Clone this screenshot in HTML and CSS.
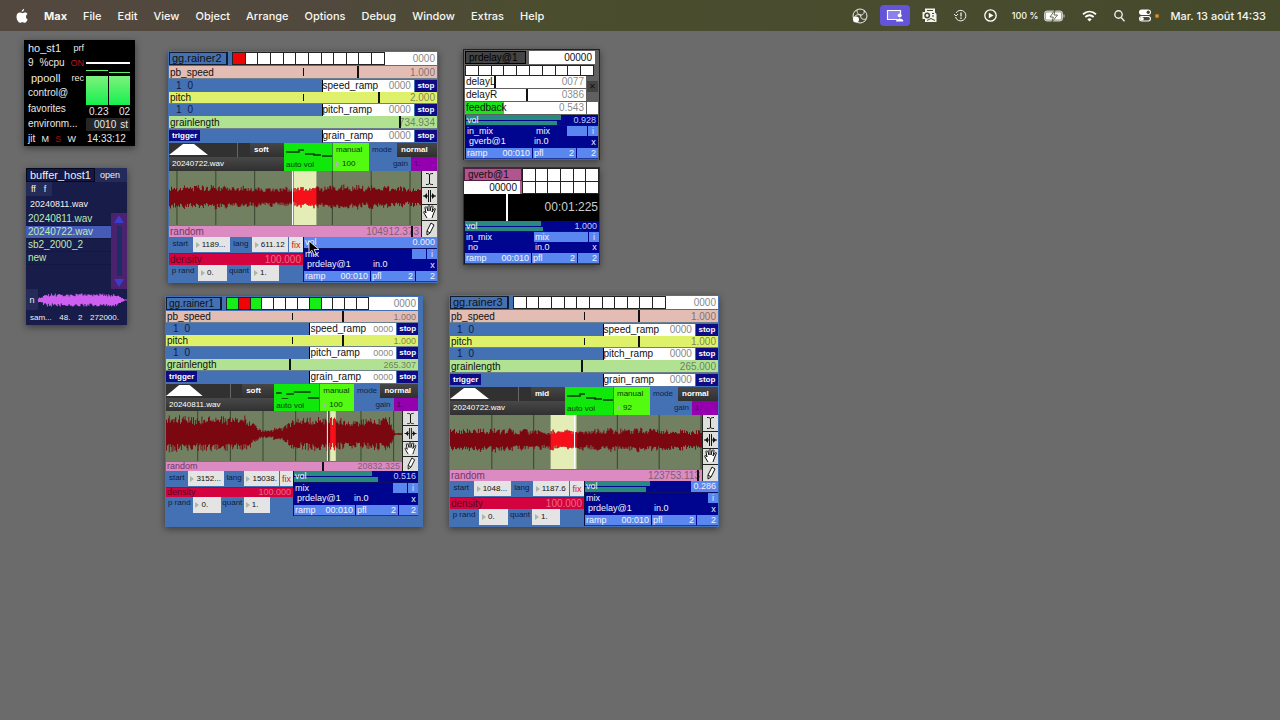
FILE: index.html
```html
<!DOCTYPE html>
<html lang="fr">
<head>
<meta charset="utf-8">
<title>Max</title>
<link rel="stylesheet" href="styles.css">
</head>
<body>
<header class="menubar">
  <nav class="menus">
    <svg class="apple" viewBox="0 0 12 14"><path d="M8.1 0c.1 1.400-1.100 2.800-2.400 2.800C5.500 1.500 6.800.2 8.100 0zM10 7.400c0-1.300.7-2 1.500-2.500-.7-1-1.700-1.300-2.500-1.300-1 0-1.800.6-2.500.6-.7 0-1.600-.6-2.600-.6C2.200 3.600.5 5 .5 7.800c0 2.900 2 6 3.500 6 .9 0 1.300-.6 2.400-.6s1.400.6 2.300.6c1.300 0 2.400-2 2.900-3.400C10.600 9.900 10 8.800 10 7.400z"/></svg>
    <button class="menu app">Max</button>
    <button class="menu">File</button>
    <button class="menu">Edit</button>
    <button class="menu">View</button>
    <button class="menu">Object</button>
    <button class="menu">Arrange</button>
    <button class="menu">Options</button>
    <button class="menu">Debug</button>
    <button class="menu">Window</button>
    <button class="menu">Extras</button>
    <button class="menu">Help</button>
  </nav>
  <div class="status">
    <svg width="16" height="16" viewBox="0 0 16 16" fill="none" stroke="#eee"><circle cx="8" cy="8" r="7"/><path d="M5 2c0 4 2 5 4 5s4-2 3-5M9 7c-1 3 1 5 5 4M9 7C6 6 3 7 2 10"/><circle cx="4" cy="11.500" r="3" fill="#fff" stroke="none"/></svg>
    <span class="share"><svg width="18" height="13" viewBox="0 0 18 13"><path d="M11 10.500H1.500v-9h13V5" fill="#8b80ee" stroke="#fff" stroke-width="1.200"/><circle cx="13.700" cy="6.500" r="2" fill="#fff"/><path d="M10 12.500c0-4 7.400-4 7.400 0z" fill="#fff"/></svg></span>
    <svg width="15" height="15" viewBox="0 0 15 15"><path d="M3 .5h10v4l1.500 1.500v8H3v-3H.5V4H3z" fill="#f4f4ee"/><path d="M5 2.500h6M10 5.500h2M10 8h2M5 12.500l4-2 4 2" fill="none" stroke="#464a2c"/><circle cx="5.200" cy="7.500" r="2.200" fill="none" stroke="#464a2c" stroke-width="1.500"/></svg>
    <svg width="13" height="13" viewBox="0 0 13 13" fill="none" stroke="#eee"><path d="M2 4a5.300 5.300 0 1 1-.5 4"/><path d="M0 5l2 2 2-2" /><path d="M7 3.500v4M7 8.500v1.500" stroke-width="1.300"/></svg>
    <svg width="13" height="13" viewBox="0 0 13 13"><circle cx="6.500" cy="6.500" r="5.700" fill="none" stroke="#fff" stroke-width="1.300"/><path d="M4.800 3.700v5.600l4.700-2.800z" fill="#fff"/></svg>
    <span class="battery">100 %
      <svg width="21" height="12" viewBox="0 0 21 12"><rect x=".5" y="1" width="18" height="10" rx="2.500" fill="#aaa990" stroke="#ccc"/><rect x="2" y="2.500" width="15" height="7" rx="1" fill="#fff"/><path d="M11 0L6 7h3.300L8 12l5.500-7H10z" fill="#fff" stroke="#464a2c" stroke-width=".8"/><path d="M20 4.500v3" stroke="#ccc"/></svg></span>
    <svg width="15" height="12" viewBox="0 0 15 12" fill="none" stroke="#fff" stroke-width="1.900"><path d="M1 4.300c4-3.600 9-3.600 13 0M3.300 7c2.600-2.300 5.800-2.300 8.400 0"/><path d="M5.300 9.200c1.400-1.200 3-1.200 4.400 0L7.500 11.500z" fill="#fff" stroke="none"/></svg>
    <svg width="11" height="12" viewBox="0 0 11 12" fill="none" stroke="#eee" stroke-width="1.400"><circle cx="4.500" cy="4.500" r="3.700"/><path d="M7.200 7.500l3.300 3.800"/></svg>
    <span class="control"><svg width="12" height="13" viewBox="0 0 13 13"><rect width="13" height="6" rx="3" fill="#fff"/><circle cx="10" cy="3" r="1.800" fill="#464a2c"/><rect x=".6" y="7.600" width="11.800" height="4.800" rx="2.400" fill="none" stroke="#fff" stroke-width="1.200"/><circle cx="3.200" cy="10" r="2" fill="#fff"/></svg><i class="dot"></i></span>
    <time class="clock">Mar. 13 août 14:33</time>
  </div>
</header>

<main class="desktop">
  <section class="win host">
    <div class="host-left">
      <div class="host-row"><span class="host-title">ho_st1</span><button class="small">prf</button></div>
      <div class="host-row"><span>9</span><span>%cpu</span><button class="small on">ON</button></div>
      <div class="host-row"><span class="host-title inset">ppooll</span><button class="small">rec</button></div>
      <div class="host-row">control@</div>
      <div class="host-row">favorites</div>
      <div class="host-row">environm...</div>
      <div class="host-row spaced"><span>jit</span><span class="letter">M</span><span class="letter red">S</span><span class="letter">W</span></div>
    </div>
    <div class="host-right">
      <div class="white-line"></div>
      <div class="levels"><div class="level"></div><div class="level low"></div></div>
      <div class="host-pair"><span>0.23</span><span>02</span></div>
      <div class="host-pair count"><span>0010</span><span>st</span></div>
      <div class="host-time">14:33:12</div>
    </div>
  </section>

  <section class="win buffer">
    <div class="buffer-head"><span class="buffer-title">buffer_host1</span><button class="open">open</button></div>
    <div class="buffer-tabs"><button class="small">ff</button><button class="small">f</button></div>
    <div class="buffer-current">20240811.wav</div>
    <div class="buffer-body">
      <ul class="files"><li>20240811.wav</li><li class="selected">20240722.wav</li><li>sb2_2000_2</li><li>new</li></ul>
      <div class="scroll"><i class="up"></i><i class="track"></i><i class="down"></i></div>
    </div>
    <div class="buffer-wave"><button class="note">n</button><svg class="mini" viewBox="0 0 90 16" preserveAspectRatio="none"></svg></div>
    <div class="buffer-foot"><span>sam...</span><span>48.</span><span>2</span><span>272000.</span></div>
  </section>

  <section class="win rainer r2" data-index="0"></section>
  <section class="win rainer r1 compact" data-index="1"></section>
  <section class="win rainer r3" data-index="2"></section>

  <section class="win prdelay">
    <div class="head"><span class="tag">prdelay@1</span><input class="num-white" aria-label="prdelay number" value="00000"></div>
    <div class="cells ten"></div>
    <div class="delay-body">
      <div class="delay-bars">
        <div class="bar white"><span>delayL</span><i class="mark" style="left:24%"></i><b>0077</b></div>
        <div class="bar white"><span>delayR</span><i class="mark" style="left:50%"></i><b>0386</b></div>
        <div class="bar white"><i class="fill" style="width:32%"></i><span>feedback</span><b>0.543</b></div>
      </div>
      <div class="delay-side"><button class="close" aria-label="close">✕</button><i></i></div>
    </div>
    <div class="mixer" data-mixer="prdelay"></div>
  </section>

  <section class="win gverb">
    <div class="gverb-head">
      <div class="gverb-name"><span class="tag pink">gverb@1</span><input class="num-white" aria-label="gverb number" value="00000"></div>
      <div class="cells double"></div>
    </div>
    <div class="time"><i class="mark" style="left:31%"></i>00:01:225</div>
    <div class="mixer" data-mixer="gverb"></div>
  </section>

  <svg class="cursor" viewBox="0 0 12 16"><path d="M1 1v12l3-2.800 2 5 2.200-1-2-4.700H11z" fill="#000" stroke="#fff" stroke-width=".8"/></svg>
</main>
<script src="app.js"></script>
</body>
</html>
```
FILE: styles.css
```css
* { box-sizing: border-box; }
body {
  margin: 0;
  min-height: 100vh;
  display: flex;
  flex-direction: column;
  background: #6b6b6b;
  font-family: "Liberation Sans", Arial, sans-serif;
  font-size: 10px;
  line-height: 12px;
  color: #111;
  white-space: nowrap;
}
button, input, select {
  font: inherit; color: inherit; background: none;
  border: 0; border-radius: 0; margin: 0; padding: 0; min-width: 0;
  appearance: none;
}
input { width: 100%; }
svg { display: block; }

/* menu bar */
.menubar {
  display: flex; justify-content: space-between; align-items: center;
  height: 31px; padding: 0 14px 0 16px;
  background: linear-gradient(90deg, #53483f 0, #51483e 24%, #4b4d2f 42%, #464a2c 100%);
  color: #f7f7f0; font-family: Inter, sans-serif; font-size: 11px; line-height: 16px;
}
.menus, .status { display: flex; align-items: center; }
.menus { gap: 16px; }
.menu { font-weight: 500; }
.menu.app { font-weight: 700; }
.apple { width: 12px; height: 14px; fill: #fff; }
.status { gap: 17px; }
.share { display: flex; align-items: center; justify-content: center; width: 30px; height: 21px; margin: 0 -5px; border-radius: 4px; background: #6354d8; }
.battery { display: flex; align-items: center; gap: 5px; font-size: 9px; font-weight: 500; margin-left: -2px; }
.control { display: flex; align-items: center; gap: 4px; margin: 0 -5px 0 -3px; }
.dot { width: 4px; height: 4px; border-radius: 50%; background: #d98a28; }
.clock { font-size: 11px; font-weight: 500; }

/* desktop */
.desktop { position: relative; flex: 1; }
.win { position: absolute; box-shadow: 0 2px 7px rgba(0, 0, 0, .45); }
.small { font-size: 9px; }
.cursor { position: absolute; left: 308px; top: 209px; width: 12px; height: 16px; }

/* host */
.host { left: 24px; top: 9px; width: 111px; padding: 0 5px 0 4px; display: grid; grid-template-columns: 58px 1fr; background: #000; color: #e8e8e8; }
.host-row { display: flex; align-items: center; justify-content: space-between; height: 15px; padding-right: 2px; }
.host-row:nth-child(4n) { height: 16px; }
.host-row.spaced { padding-right: 10px; }
.host-title { font-size: 11px; }
.inset { padding-left: 3px; }
.letter { font-size: 9px; }
.on { color: #c0101c; }
.red { color: #a01018; }
.host-right { padding-top: 22px; }
.white-line { height: 2px; background: #fff; }
.levels { display: flex; gap: 1px; height: 41px; padding-top: 6px; }
.level { flex: 1; border-top: 1px solid #5cf06c; background: linear-gradient(#000 5px, #7df27d 5px, #16f04e); }
.level.low { margin-top: 2px; background: linear-gradient(#000 3px, #7df27d 3px, #16f04e); }
.host-pair { display: flex; justify-content: space-between; padding-left: 3px; line-height: 13px; }
.count { padding: 0 2px 0 8px; background: #252525; }
.host-time { padding-left: 1px; line-height: 15px; }

/* buffer host */
.buffer { left: 26px; top: 137px; width: 101px; background: #171c49; color: #f0f0f0; }
.buffer-head { display: flex; align-items: center; justify-content: space-between; height: 14px; padding-right: 7px; background: #252b58; }
.buffer-title { padding: 0 3px; font-size: 11px; background: #141842; border: 1px solid #050920; }
.open, .note { font-size: 9px; }
.buffer-tabs { display: flex; gap: 8px; width: 26px; height: 14px; padding-left: 5px; background: #252b58; }
.buffer-current { padding-left: 4px; font-size: 9px; line-height: 17px; }
.buffer-body { display: grid; grid-template-columns: 1fr 16px; height: 76px; }
.files { margin: 0; padding: 0; list-style: none; color: #bdeab5; }
.files li { padding-left: 2px; border-bottom: 1px solid #141740; line-height: 12px; }
.files .selected { background: #465bb8; }
.scroll { display: flex; flex-direction: column; align-items: center; justify-content: space-between; padding: 2px 0; background: #4a226e; }
.up, .down { border: 5px solid transparent; }
.up { border-top: 0; border-bottom: 8px solid #3c3ccf; }
.down { border-bottom: 0; border-top: 8px solid #3c3ccf; }
.track { flex: 1; width: 5px; margin: 3px 0; background: #1f2d66; }
.buffer-wave { display: flex; align-items: center; height: 21px; }
.note { width: 12px; height: 21px; background: #252b58; }
.mini { flex: 1; height: 14px; width: 100%; }
.buffer-foot { display: flex; justify-content: space-between; padding: 0 8px 0 4px; font-size: 8px; line-height: 15px; }

/* grain players */
.rainer { padding: 1px; width: 270px; background: #4471b3; }
.r2 { left: 168px; top: 20px; }
.r3 { left: 449px; top: 264px; }
.r1 { left: 165px; top: 265px; width: 258px; padding: 1px 5px 11px 1px; }
.head { display: flex; height: 14px; padding-bottom: 1px; }
.tag { padding: 0 3px; border: 1px solid #101c30; font-size: 10px; line-height: 11px; }
.rainer .tag { width: 59px; margin-right: 4px; padding: 0 2px; font-size: 11px; border-width: 1px 2px 1px 1px; }
.rainer.compact .tag { width: 56px; font-size: 10px; }
.cells { display: grid; grid-template-columns: repeat(12, 1fr); background: #222; gap: 1px; padding: 1px; }
.cells i { background: #fff; }
.cells .red-cell { background: #ed0505; }
.cells .green-cell { background: #16ee16; }
.rainer .cells { flex: 3; }
.num-white { background: #fff; text-align: right; padding-right: 3px; }
.rainer .num-white { flex: 1; width: 0; color: #888; padding-right: 2px; }

.bar { position: relative; display: flex; justify-content: space-between; height: 12px; padding: 0 2px 0 1px; line-height: 12px; }
.bar span { position: relative; }
.bar b { font-weight: 400; color: rgba(70, 70, 70, .65); }
.compact b { font-size: 9px; }
.mark { position: absolute; top: 0; bottom: 0; width: 2px; background: #111; }
.mark.thin { top: 2px; bottom: 2px; width: 1px; }
.speed { background: #e3bdb4; margin-bottom: 1px; height: 13px; line-height: 13px; }
.pitch { background: #dff06a; }
.grain { background: #b0e292; margin-bottom: 1px; height: 13px; line-height: 13px; }
.compact .speed, .compact .grain { margin-bottom: 0; height: 12px; line-height: 12px; }
.bar.speed, .bar.pitch, .bar.grain { border-bottom: 1px solid #6c7f8e; }
.random { background: #dc8ac2; height: 12px; border-top: 1px solid #8c6580; line-height: 11px; }
.random, .density { color: #703868; }
.compact .random { height: 10px; line-height: 9px; }
.density { background: #d40340; color: #54061c; height: 12px; border-top: 1px solid #8a1540; line-height: 11px; }
.density b { color: #ee6a83; }
.compact .density { height: 10px; line-height: 9px; }

.ramp { display: grid; grid-template-columns: 152fr 92fr 23fr; height: 12px; line-height: 12px; }
.ramp.tall { height: 13px; }
.states { display: flex; gap: 6px; padding-left: 7px; color: #101c48; line-height: 11px; }
.ramp-name { display: flex; justify-content: space-between; padding-right: 3px; background: #fff; border-left: 1px solid #000; border-bottom: 1px solid #5573a8; }
.ramp-name b { font-weight: 400; color: #888; }
.navy { background: #0d0b86; color: #fff; font-size: 8px; font-weight: 700; border: 1px solid #4471b3; border-width: 0 0 1px 1px; }
.trigger { padding: 0 3px; height: 12px; display: block; border-left: 0; }

.panel { display: grid; grid-template-columns: 115fr 48fr 37fr 68fr; height: 28px; font-size: 8px; line-height: 14px; }
.compact .panel { height: 27px; }
.panel select { font-size: 8px; width: 100%; }
.file-box { display: grid; grid-template-rows: 1fr 1fr; background: #313131; color: #fff; }
.file-top { display: grid; grid-template-columns: 68fr 13fr 34fr; }
.file-top svg { width: 100%; height: 14px; }
.file-top i { border-left: 1px solid #666; }
.file-top select, .normal { background: linear-gradient(#464646, #303030); color: #fff; font-weight: 700; padding-left: 4px; }
.file-box > select { padding-left: 3px; background: linear-gradient(#484848, #303030); color: #fff; }
.auto { display: flex; flex-direction: column; background: #10e80c; color: #063806; padding: 1px 0 0 2px; }
.auto svg { width: 100%; height: 14px; }
.auto span { line-height: 13px; }
.manual { background: #52fb10; color: #083808; padding-left: 3px; border-left: 1px solid #2a9430; }
.manual label { display: flex; align-items: center; }
.tri { flex: none; width: 0; height: 0; border: 3px solid transparent; border-left: 4px solid #a8b8a8; border-right: 0; margin-right: 2px; }
.modes { display: grid; grid-template-columns: 28fr 14fr 26fr; grid-template-rows: 1fr 1fr; color: #10244c; }
.modes > span { padding-left: 3px; }
.normal { grid-column: 2 / 4; }
.modes .gain-label { grid-column: 1 / 3; text-align: right; padding-right: 3px; }
.gain { background: #9500ae; color: #3b0046; padding-left: 3px; }

.wave-area { display: grid; grid-template-columns: 1fr 16px; background: #4471b3; }
.wave { width: 100%; height: 54px; background: #708061; }
.compact .wave { height: 50px; }
.tools { display: grid; grid-template-rows: repeat(4, 1fr); gap: 1px; padding-left: 1px; background: #222; }
.tools button { display: flex; align-items: center; justify-content: center; background: #dededb; overflow: hidden; }
.tools svg { width: 13px; height: 14px; fill: none; stroke: #111; }
.compact .tools svg { height: 13px; }

.lower { display: grid; grid-template-columns: 134fr 134fr; align-items: start; font-size: 8px; }
.compact .lower { grid-template-columns: 127fr 125fr; }
.params { display: grid; grid-template-columns: 23fr 38fr 20fr 37fr 14fr; column-gap: 1px; height: 15px; line-height: 14px; color: #0e1d40; margin-bottom: 1px; }
.params > span { text-align: center; }
.params.second { grid-template-columns: 28fr 29fr 22fr 28fr 23fr; height: 16px; line-height: 12px; margin-bottom: 0; }
.params label { display: flex; align-items: center; padding-left: 3px; background: #e4e4e4; color: #111; }
.compact .params label { padding-left: 2px; }
.params .fix { background: #e4e4e4; color: #dc1515; font-size: 9px; }
.density { font-size: 10px; }
.compact .density, .compact .random { font-size: 9px; }

/* mixer strip */
.mixer { background: #000590; color: #f2f4ff; font-size: 9px; line-height: 11px; border-left: 1px solid #101040; }
.vol { position: relative; display: flex; justify-content: space-between; height: 12px; padding: 0 2px 0 1px; border-bottom: 1px solid #101060; overflow: hidden; }
.vol i { position: absolute; left: 0; height: 5px; background: #298a80; }
.vol i + i { top: 6px; }
.vol span, .vol output { position: relative; }
.vol output { color: #c3cbf8; }
.vol.full output, .hot output { color: #eef1ff; }
.vol.full, .hot output { background: #5a87ef; }
.hot output { padding: 0 2px; margin-right: -2px; }
.route { display: grid; grid-template-columns: 1fr 14px 10px; gap: 1px; height: 10px; line-height: 10px; }
.route > span { padding-left: 1px; }
.route i, .route button { background: #5a87ef; color: #dfe6ff; }
.route .off { background: none; }
.route.pair { grid-template-columns: 68px 1fr 10px; }
.route.triple { grid-template-columns: 68px 1fr 20px 10px; }
.route .lit { background: #5a87ef; }
.target { display: grid; grid-template-columns: 1fr 55px 9px; height: 12px; padding-left: 3px; line-height: 11px; }
.target button { font-size: 9px; }
.foot { display: grid; grid-template-columns: 66px 1fr 21px; gap: 1px; height: 11px; border-bottom: 1px solid #20389a; line-height: 10px; }
.compact .foot { grid-template-columns: 61px 1fr 19px; }
.foot div { display: flex; justify-content: space-between; padding: 0 2px 0 1px; background: #5a87ef; }
.foot div:last-child { justify-content: flex-end; }

/* delay and reverb */
.prdelay { left: 463px; top: 18px; width: 137px; padding: 1px; background: #606060; border: 1px solid #222; border-width: 1px 1px 0; }
.prdelay .head { justify-content: space-between; }
.prdelay .tag { width: 61px; background: #444; border-color: #000; color: #000; }
.prdelay .num-white { width: 66px; margin-right: 3px; }
.prdelay .vol, .gverb .vol, .gverb .target { height: 11px; }
.ten { grid-template-columns: repeat(10, 1fr); height: 11px; margin-right: 4px; }
.delay-body { display: grid; grid-template-columns: 1fr 11px; gap: 1px; }
.delay-bars { display: grid; gap: 1px; padding-bottom: 1px; }
.white { background: #fff; padding: 0 2px 0 1px; }
.fill { position: absolute; left: 0; top: 0; bottom: 0; background: #18e418; }
.delay-side { display: flex; flex-direction: column; justify-content: flex-end; padding-bottom: 1px; }
.close { height: 11px; background: #444; font-size: 8px; line-height: 10px; }
.delay-side i { height: 12px; margin-top: 10px; background: #fff; }
.gverb { left: 463px; top: 136px; width: 137px; padding: 1px; background: #333; }
.gverb-head { display: grid; grid-template-columns: 58px 1fr; height: 26px; background: #b0558e; }
.gverb-name { display: grid; grid-template-rows: 13px 13px; }
.pink { border-color: #4f2040; }
.gverb-name .num-white { width: 56px; }
.double { grid-template-columns: repeat(6, 1fr); }
.time { position: relative; height: 27px; padding-right: 1px; background: #000; color: #ccc; font-size: 12px; line-height: 27px; text-align: right; }
.time .mark { background: #fff; }
```
FILE: app.js
```js
const rainers = [
  { name: 'gg.rainer2', cells: ['red'], speed: '1.000', pitch: '2.000', grain: '734.934', marks: [[50, 70], [50, 78], [null, 86]],
    soft: 'soft', file: '20240722.wav', man: '100', lines: [8, 39], sel: [125, 148], env: 'flat', mid: 26, seed: 4,
    random: '104912.373', rmark: 96, start: '1189...', lang: '611.12', vol: '0.000', full: true, auto: 'M0 8h13V6h5M19 10h9v1h7M36 12h10' },
  { name: 'gg.rainer1', cells: ['green', 'red', 'green', '', '', '', '', 'green'], speed: '1.000', pitch: '1.000', grain: '265.307', marks: [[50, 70], [50, 70], [null, 49]],
    soft: 'soft', file: '20240811.wav', man: '100', lines: [34, 35], sel: [176, 182], env: 'wide', mid: 23, seed: 9,
    random: '20832.325', rmark: 66, start: '3152...', lang: '15038.', vol: '0.516', teal: [63, 68], auto: 'M0 8h6M11 9h8M19 7h18M6 14h7M34 13h12' },
  { name: 'gg.rainer3', cells: [], speed: '1.000', pitch: '1.000', grain: '265.000', marks: [[50, 70], [50, 70], [null, 49]],
    soft: 'mid', file: '20240722.wav', man: '92', lines: [42, 42], sel: [101, 127], env: 'flat', mid: 25, seed: 14,
    random: '123753.113', rmark: 98, start: '1048...', lang: '1187.6', vol: '0.286', hot: true, teal: [49, 46], auto: 'M0 8h13V6h5M19 10h9v1h7M36 12h10' }
];
const strips = {
  prdelay: { vol: '0.928', teal: [72, 69], kind: 'triple', target: 'gverb@1' },
  gverb: { vol: '1.000', teal: [57, 58], kind: 'pair', target: 'no' }
};

function cells(n, colors = []) {
  return Array.from({ length: n }, (_, i) => `<i class="${colors[i] ? colors[i] + '-cell' : ''}"></i>`).join('');
}

// Amplitude outline, mirrored around the centre line.
function outline(width, mid, amp, seed) {
  let s = seed, top = '', bottom = '';
  const rnd = () => (s = (s * 16807 + 11) % 2147483647) / 2147483647;
  for (let x = 0; x < width; x++) {
    const a = amp(x);
    top += `L${x} ${(mid - a * (0.65 + rnd() * 0.6)).toFixed(1)}H${x + 1}`;
    bottom = `L${x + 1} ${(mid + a * (0.65 + rnd() * 0.6)).toFixed(1)}H${x}` + bottom;
  }
  return `M0 ${mid}${top}${bottom}Z`;
}
const envelopes = {
  flat: x => 8.5 + Math.sin(x / 23) + 0.8 * Math.sin(x / 2.3 + 1),
  wide: x => {
    const k = x * 238 / 253;
    if (k < 80) return 14.5 + Math.sin(k / 6);
    if (k < 96) return 14 - (k - 80) * 0.68;
    if (k < 108) return 3.2;
    if (k < 128) return k < 116 ? 5 : 4 + (k - 116) * 0.75;
    if (k < 225) return 13 + Math.sin(k / 11);
    return Math.max(0.8, 12 - (k - 225) * 2);
  }
};

function wave(r) {
  const d = outline(253, r.mid, envelopes[r.env], r.seed * 7919);
  let grid = '';
  for (let x = r.lines[0]; x < 253; x += r.lines[1]) grid += `M${x} 0V54`;
  const [a, b] = r.sel;
  const id = 'sel-' + r.name.replace('.', '-');
  const playhead = r.env === 'wide' ? a - 3 : r.hot ? b - 2 : a - 1;
  return `<svg class="wave" viewBox="0 0 253 ${r.env === 'wide' ? 50 : 54}" preserveAspectRatio="none">
    <defs><clipPath id="${id}"><rect x="${a}" width="${b - a}" height="54"/></clipPath></defs>
    <path d="${grid}" stroke="#38442f"/>
    <rect x="${a}" width="${b - a}" height="54" fill="#e3edb5"/>
    <path d="${d}" fill="#7b0710"/>
    <path d="${d}" fill="#f5101a" clip-path="url(#${id})"/>
    <path d="M${playhead} 0v54" stroke="#fff"/>
  </svg>`;
}

function mixer(m) {
  const vol = `<div class="vol ${m.full ? 'full' : ''} ${m.hot ? 'hot' : ''}">
    ${m.teal ? `<i style="width:${m.teal[0]}%"></i><i style="width:${m.teal[1]}%"></i>` : ''}<span>vol</span><output>${m.vol}</output></div>`;
  const route = m.kind === 'triple'
    ? `<div class="route triple"><span>in_mix</span><span>mix</span><i></i><button>i</button></div>`
    : m.kind === 'pair'
      ? `<div class="route pair"><span>in_mix</span><span class="lit">mix</span><button>i</button></div>`
      : `<div class="route"><span>mix</span><i class="${m.hot ? 'off' : ''}"></i><button>i</button></div>`;
  return `${vol}${route}
    <div class="target"><span>${m.target || 'prdelay@1'}</span><span>in.0</span><button>x</button></div>
    <div class="foot"><div><span>ramp</span><span>00:010</span></div><div><span>pfl</span><span>2</span></div><div><span>2</span></div></div>`;
}

function bar(kind, label, value, marks) {
  const m = marks.map((p, i) => p === null ? '' : `<i class="mark ${i === 0 ? 'thin' : ''}" style="left:${p}%"></i>`).join('');
  return `<div class="bar ${kind}">${m}<span>${label}</span><b>${value}</b></div>`;
}
function ramp(name, trigger) {
  const left = trigger ? '<div><button class="navy trigger">trigger</button></div>' : '<div class="states"><span>1</span><span>0</span></div>';
  return `<div class="ramp ${trigger ? 'tall' : ''}">${left}
    <div class="ramp-name"><span>${name}</span><b>0000</b></div><button class="navy">stop</button></div>`;
}
function box(label, value) {
  return `<label><i class="tri"></i><input aria-label="${label}" value="${value}"></label>`;
}

function rainer(r) {
  return `
  <div class="head"><span class="tag">${r.name}</span><div class="cells">${cells(12, r.cells)}</div><input class="num-white" aria-label="preset" value="0000"></div>
  ${bar('speed', 'pb_speed', r.speed, r.marks[0])}${ramp('speed_ramp')}
  ${bar('pitch', 'pitch', r.pitch, r.marks[1])}${ramp('pitch_ramp')}
  ${bar('grain', 'grainlength', r.grain, r.marks[2])}${ramp('grain_ramp', true)}
  <div class="panel">
    <div class="file-box">
      <div class="file-top"><svg viewBox="0 0 68 14" preserveAspectRatio="none"><path d="M0 12L14 1h11l14 11z" fill="#fff"/></svg><i></i><select aria-label="window shape"><option>${r.soft}</option></select></div>
      <select aria-label="buffer"><option>${r.file}</option></select>
    </div>
    <div class="auto"><svg viewBox="0 0 46 14" preserveAspectRatio="none"><path d="${r.auto}" fill="none" stroke="#053505" stroke-width="1.500"/></svg><span>auto vol</span></div>
    <div class="manual"><div>manual</div>${box('manual volume', r.man)}</div>
    <div class="modes"><span>mode</span><select class="normal" aria-label="mode"><option>normal</option></select><span class="gain-label">gain</span><input class="gain" aria-label="gain" value="1."></div>
  </div>
  <div class="wave-area">
    <div>${wave(r)}${bar('random', 'random', r.random, [null, r.rmark])}</div>
    <div class="tools">
      <button aria-label="select"><svg viewBox="0 0 13 14"><path d="M3 1.500c2 0 3.500 0 3.500 2V11c0 1.500-1.500 1.500-3.500 1.500M10 1.500c-2 0-3.500 0-3.500 2V11c0 1.500 1.500 1.500 3.500 1.500"/></svg></button>
      <button aria-label="loop"><svg viewBox="0 0 13 14"><path d="M5.500 1v12M7.500 1v12M0 7h5M8 7h5"/><path d="M1 7l3-3v6zM12 7L9 4v6z" fill="#111" stroke="none"/></svg></button>
      <button aria-label="move"><svg viewBox="0 0 13 14"><path d="M4 13L1 8c-1-2 1-2 2 0L2 3c0-2 2-1 2 0l1 3V2c0-2 2-2 2 0v4l1-4c1-2 2-1 2 0l-1 5 2-3c1-1 2 0 1 1L10 10l-1 3" fill="#fff"/></svg></button>
      <button aria-label="draw"><svg viewBox="0 0 13 14"><path d="M4 9l4-8 3 2-4 8-3 2zM4 9l3 2" fill="#fff"/></svg></button>
    </div>
  </div>
  <div class="lower">
    <div>
      <div class="params"><span>start</span>${box('start', r.start)}<span>lang</span>${box('lang', r.lang)}<button class="fix">fix</button></div>
      ${bar('density', 'density', '100.000', [])}
      <div class="params second"><span>p rand</span>${box('p rand', '0.')}<span>quant</span>${box('quant', '1.')}</div>
    </div>
    <div class="mixer">${mixer(r)}</div>
  </div>`;
}

document.querySelectorAll('.rainer').forEach(el => { el.innerHTML = rainer(rainers[el.dataset.index]); });
document.querySelectorAll('[data-mixer]').forEach(el => { el.innerHTML = mixer(strips[el.dataset.mixer]); });
document.querySelector('.ten').innerHTML = cells(10);
document.querySelector('.double').innerHTML = cells(12);
document.querySelector('.mini').innerHTML =
  `<path d="${outline(90, 8, x => x < 8 ? 2 + x / 2 : x > 80 ? Math.max(0.6, (88 - x) * 0.7) : 6, 31337)}" fill="#cf5ff0"/>`;
```
